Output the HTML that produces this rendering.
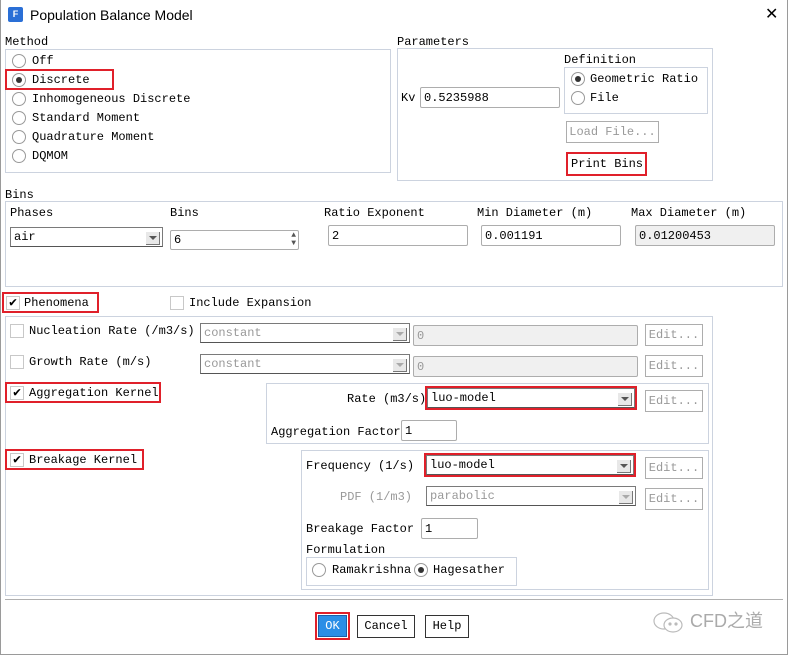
<!DOCTYPE html>
<html><head><meta charset="utf-8"><style>
*{margin:0;padding:0;box-sizing:border-box}
body{width:788px;height:655px;background:#fff;position:relative;overflow:hidden;font-family:"Liberation Mono","Noto Sans CJK SC",monospace;font-size:12px;color:#000}
div,span{position:absolute}
.t{white-space:nowrap;line-height:14px}
.box{border:1px solid #ccd3df}
.inp{border:1px solid #adadad;border-radius:2px;background:#fff;padding-left:3px;display:flex;align-items:center}
.dd{border:1px solid #7a7a7a;border-bottom-color:#555;background:#fff;padding-left:3px;display:flex;align-items:center}
.dd:after{content:"";position:absolute;right:2px;top:4px;width:13px;height:12px;background:#e8e8e8;border-right:1px solid #777;border-bottom:1px solid #777}
.arr{position:absolute;right:5px;top:8px;width:0;height:0;border-left:4px solid transparent;border-right:4px solid transparent;border-top:4px solid #555;z-index:2}
.dis{color:#999}
.rad{width:14px;height:14px;border:1px solid #999;border-radius:50%;background:#fff}
.rad.on:after{content:"";position:absolute;left:3px;top:3px;width:6px;height:6px;border-radius:50%;background:#333}
.chk{width:14px;height:14px;border:1px solid #c8c8c8;background:#fff}
.ck{font-size:13px;line-height:14px;width:14px;text-align:center}
.red{border:2px solid #e0202a}
.btn{border:1px solid #adadad;text-align:center;line-height:20px}
.btnb{border:1px solid #333;text-align:center;line-height:21px;background:#fff}
</style></head><body>
<div style="left:0;top:0;width:788px;height:655px;border:1px solid #9a9a9a;border-top:none"></div>
<div style="left:8px;top:7px;width:15px;height:15px;background:#2a6fd6;border-radius:2px;color:#fff;font:bold 9px 'Liberation Sans',sans-serif;text-align:center;line-height:15px">F</div>
<div class="t" style="left:30px;top:7px;font:14px 'Liberation Sans',sans-serif;line-height:17px">Population Balance Model</div>
<div class="t" style="left:765px;top:5px;font:16px 'Liberation Sans',sans-serif;line-height:20px">✕</div>

<div class="t" style="left:5px;top:35px">Method</div>
<div class="box" style="left:5px;top:49px;width:386px;height:124px"></div>
<div class="rad" style="left:12px;top:54px"></div><div class="t" style="left:32px;top:54px">Off</div>
<div class="rad on" style="left:12px;top:73px"></div><div class="t" style="left:32px;top:73px">Discrete</div>
<div class="red" style="left:5px;top:69px;width:109px;height:21px"></div>
<div class="rad" style="left:12px;top:92px"></div><div class="t" style="left:32px;top:92px">Inhomogeneous Discrete</div>
<div class="rad" style="left:12px;top:111px"></div><div class="t" style="left:32px;top:111px">Standard Moment</div>
<div class="rad" style="left:12px;top:130px"></div><div class="t" style="left:32px;top:130px">Quadrature Moment</div>
<div class="rad" style="left:12px;top:149px"></div><div class="t" style="left:32px;top:149px">DQMOM</div>

<div class="t" style="left:397px;top:35px">Parameters</div>
<div class="box" style="left:397px;top:48px;width:316px;height:133px"></div>
<div class="t" style="left:401px;top:91px">Kv</div>
<div class="inp" style="left:420px;top:87px;width:140px;height:21px">0.5235988</div>
<div class="t" style="left:564px;top:53px">Definition</div>
<div class="box" style="left:564px;top:67px;width:144px;height:47px"></div>
<div class="rad on" style="left:571px;top:72px"></div><div class="t" style="left:590px;top:72px">Geometric Ratio</div>
<div class="rad" style="left:571px;top:91px"></div><div class="t" style="left:590px;top:91px">File</div>
<div class="btn dis" style="left:566px;top:121px;width:93px;height:22px">Load File...</div>
<div class="red" style="left:566px;top:152px;width:81px;height:24px"></div>
<div class="t" style="left:571px;top:157px">Print Bins</div>

<div class="t" style="left:5px;top:188px">Bins</div>
<div class="box" style="left:5px;top:201px;width:778px;height:86px"></div>
<div class="t" style="left:10px;top:206px">Phases</div>
<div class="t" style="left:170px;top:206px">Bins</div>
<div class="t" style="left:324px;top:206px">Ratio Exponent</div>
<div class="t" style="left:477px;top:206px">Min Diameter (m)</div>
<div class="t" style="left:631px;top:206px">Max Diameter (m)</div>
<div class="dd" style="left:10px;top:227px;width:153px;height:20px">air<span class="arr"></span></div>
<div class="inp" style="left:170px;top:230px;width:129px;height:20px">6<span style="right:2px;top:1px;font-size:8px;line-height:8px;color:#555">▲<br>▼</span></div>
<div class="inp" style="left:328px;top:225px;width:140px;height:21px">2</div>
<div class="inp" style="left:481px;top:225px;width:140px;height:21px">0.001191</div>
<div class="inp" style="left:635px;top:225px;width:140px;height:21px;background:#f0f0f0">0.01200453</div>

<div class="chk" style="left:6px;top:296px"></div><div class="t ck" style="left:6px;top:296px">✔</div>
<div class="t" style="left:24px;top:296px">Phenomena</div>
<div class="red" style="left:2px;top:292px;width:97px;height:21px"></div>
<div class="chk" style="left:170px;top:296px"></div><div class="t" style="left:189px;top:296px">Include Expansion</div>
<div class="box" style="left:5px;top:316px;width:708px;height:280px"></div>

<div class="chk" style="left:10px;top:324px"></div><div class="t" style="left:29px;top:324px">Nucleation Rate (/m3/s)</div>
<div class="dd dis" style="left:200px;top:323px;width:210px;height:20px">constant<span class="arr" style="border-top-color:#aaa"></span></div>
<div class="inp dis" style="left:413px;top:325px;width:225px;height:21px;background:#f0f0f0">0</div>
<div class="btn dis" style="left:645px;top:324px;width:58px;height:22px">Edit...</div>
<div class="chk" style="left:10px;top:355px"></div><div class="t" style="left:29px;top:355px">Growth Rate (m/s)</div>
<div class="dd dis" style="left:200px;top:354px;width:210px;height:20px">constant<span class="arr" style="border-top-color:#aaa"></span></div>
<div class="inp dis" style="left:413px;top:356px;width:225px;height:21px;background:#f0f0f0">0</div>
<div class="btn dis" style="left:645px;top:355px;width:58px;height:22px">Edit...</div>

<div class="chk" style="left:10px;top:386px"></div><div class="t ck" style="left:10px;top:386px">✔</div>
<div class="t" style="left:29px;top:386px">Aggregation Kernel</div>
<div class="red" style="left:5px;top:382px;width:156px;height:21px"></div>
<div class="box" style="left:266px;top:383px;width:443px;height:61px"></div>
<div class="t" style="left:347px;top:392px">Rate (m3/s)</div>
<div class="dd" style="left:427px;top:388px;width:208px;height:20px">luo-model<span class="arr"></span></div>
<div class="red" style="left:425px;top:386px;width:212px;height:24px"></div>
<div class="btn dis" style="left:645px;top:390px;width:58px;height:22px">Edit...</div>
<div class="t" style="left:271px;top:425px">Aggregation Factor</div>
<div class="inp" style="left:401px;top:420px;width:56px;height:21px">1</div>

<div class="chk" style="left:10px;top:453px"></div><div class="t ck" style="left:10px;top:453px">✔</div>
<div class="t" style="left:29px;top:453px">Breakage Kernel</div>
<div class="red" style="left:5px;top:449px;width:139px;height:21px"></div>
<div class="box" style="left:301px;top:450px;width:408px;height:140px"></div>
<div class="t" style="left:306px;top:459px">Frequency (1/s)</div>
<div class="dd" style="left:426px;top:455px;width:208px;height:20px">luo-model<span class="arr"></span></div>
<div class="red" style="left:424px;top:453px;width:212px;height:24px"></div>
<div class="btn dis" style="left:645px;top:457px;width:58px;height:22px">Edit...</div>
<div class="t dis" style="left:340px;top:490px">PDF (1/m3)</div>
<div class="dd dis" style="left:426px;top:486px;width:210px;height:20px">parabolic<span class="arr" style="border-top-color:#aaa"></span></div>
<div class="btn dis" style="left:645px;top:488px;width:58px;height:22px">Edit...</div>
<div class="t" style="left:306px;top:522px">Breakage Factor</div>
<div class="inp" style="left:421px;top:518px;width:57px;height:21px">1</div>
<div class="t" style="left:306px;top:543px">Formulation</div>
<div class="box" style="left:306px;top:557px;width:211px;height:29px"></div>
<div class="rad" style="left:312px;top:563px"></div><div class="t" style="left:332px;top:563px">Ramakrishna</div>
<div class="rad on" style="left:414px;top:563px"></div><div class="t" style="left:433px;top:563px">Hagesather</div>

<div style="left:5px;top:599px;width:778px;height:1px;background:#b0b0b0"></div>
<div class="red" style="left:315px;top:612px;width:35px;height:28px"></div>
<div class="t" style="left:318px;top:615px;width:29px;height:22px;background:#2b8ee6;color:#fff;text-align:center;line-height:20px;border:1px solid #1a5fa8">OK</div>
<div class="btnb" style="left:357px;top:615px;width:58px;height:23px">Cancel</div>
<div class="btnb" style="left:425px;top:615px;width:44px;height:23px">Help</div>
<svg style="position:absolute;left:652px;top:610px" width="34" height="26" viewBox="0 0 34 26" fill="none" stroke="#bbb" stroke-width="1.2"><ellipse cx="12" cy="11" rx="10" ry="8"/><ellipse cx="21" cy="15" rx="9" ry="7" fill="#fff"/><circle cx="18" cy="14" r="1" fill="#bbb"/><circle cx="24" cy="14" r="1" fill="#bbb"/></svg>
<div class="t" style="left:690px;top:610px;font:18px 'Liberation Sans','Noto Sans CJK SC',sans-serif;color:#aaa;line-height:22px">CFD之道</div>
</body></html>
